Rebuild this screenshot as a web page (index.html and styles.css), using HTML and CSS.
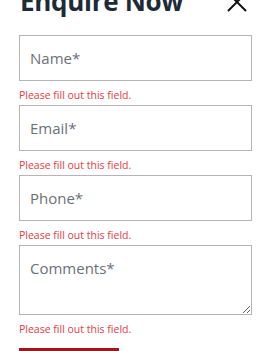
FILE: index.html
```html
<!DOCTYPE html>
<html lang="en">
<head>
    <meta charset="UTF-8">
    <meta name="viewport" content="width=device-width, initial-scale=1.0">
    <title>Enquire Now</title>
    <link rel="stylesheet" href="styles.css">
</head>
<body>

<div class="enquiry-modal">
    <div class="modal-header">
        <h2>Enquire Now</h2>
        <button class="close-btn" aria-label="Close">
            <svg width="22" height="22" viewBox="0 0 22 22">
                <path d="M2 2 L20 20 M20 2 L2 20" stroke="#111" stroke-width="2" fill="none"/>
            </svg>
        </button>
    </div>

    <form class="enquiry-form">
        <div class="field">
            <input type="text" placeholder="Name*">
            <div class="error">Please fill out this field.</div>
        </div>
        <div class="field">
            <input type="email" placeholder="Email*">
            <div class="error">Please fill out this field.</div>
        </div>
        <div class="field">
            <input type="tel" placeholder="Phone*">
            <div class="error">Please fill out this field.</div>
        </div>
        <div class="field">
            <textarea placeholder="Comments*"></textarea>
            <div class="error">Please fill out this field.</div>
        </div>
        <button type="submit" class="submit-btn">Submit</button>
    </form>
</div>

</body>
</html>
```

FILE: styles.css
```css
body {
    margin: 0;
    font-family: "Open Sans", Arial, sans-serif;
    background-color: #fff;
    color: #333;
}

.enquiry-modal {
    padding: 0 21px 0 19px;
}

.modal-header {
    display: flex;
    justify-content: space-between;
    align-items: flex-start;
    margin-top: -19px;
    height: 40px;
}

.modal-header h2 {
    margin: 0;
    font-size: 26px;
    font-weight: 700;
    color: #1e2a38;
    letter-spacing: -0.3px;
    line-height: 40px;
    padding-left: 1px;
}

.close-btn {
    background: none;
    border: none;
    padding: 0;
    margin-right: 4px;
    margin-top: 10px;
    cursor: pointer;
    line-height: 0;
}

.enquiry-form {
    margin-top: 14px;
}

.field input,
.field textarea {
    display: block;
    box-sizing: border-box;
    width: 100%;
    height: 46px;
    padding: 0 10px;
    border: 1px solid #b5b5b5;
    border-radius: 0;
    font-family: inherit;
    font-size: 15px;
    color: #333;
    background: #fff;
}

.field textarea {
    height: 70px;
    padding-top: 12px;
    resize: vertical;
}

.field input::placeholder,
.field textarea::placeholder {
    color: #6c7078;
}

.error {
    height: 24px;
    padding-top: 6px;
    box-sizing: border-box;
    font-size: 10.5px;
    line-height: 16px;
    color: #e23c46;
}

.submit-btn {
    display: block;
    margin-top: 9px;
    width: 100px;
    height: 40px;
    border: none;
    background-color: #a3151b;
    color: #fff;
    font-family: inherit;
    font-size: 15px;
    font-weight: 700;
    text-transform: uppercase;
}
```
